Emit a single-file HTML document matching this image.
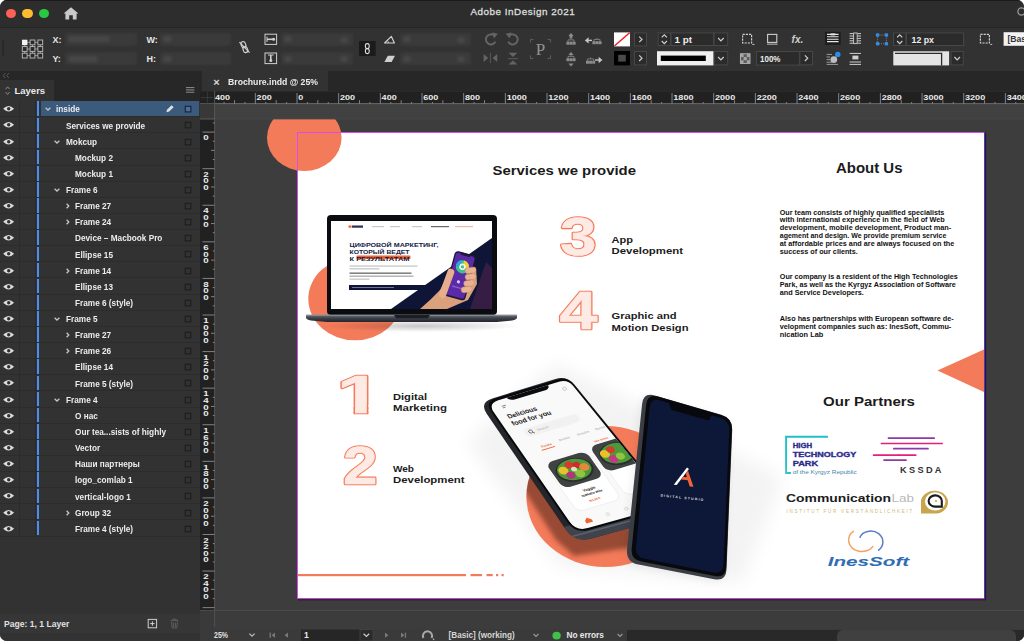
<!DOCTYPE html>
<html lang="en"><head><meta charset="utf-8"><title>Adobe InDesign 2021</title>
<style>
html,body{margin:0;padding:0;background:#fff;}
body{width:1024px;height:641px;overflow:hidden;position:relative;font-family:"Liberation Sans", "DejaVu Sans", sans-serif;}
#win{position:absolute;left:0;top:0;width:1024px;height:641px;background:#323232;border-radius:7px;overflow:hidden;}
.abs{position:absolute;}
.t{position:absolute;white-space:nowrap;color:#e6e6e6;font-weight:bold;font-size:9px;line-height:12px;transform-origin:0 50%;}
.row .t{transform:scaleX(.958);}
.fld{position:absolute;background:#3a3a3a;border-radius:2px;filter:blur(.9px);}
.smg{position:absolute;background:#474747;height:6px;border-radius:3px;filter:blur(1.6px);}
.box{position:absolute;background:#2b2b2b;border:1px solid #454545;box-sizing:border-box;border-radius:1px;}
.row{position:absolute;left:0;width:200px;height:16.1px;}
.row .sep{position:absolute;left:0;right:0;bottom:0;height:1px;background:#2c2c2c;}
svg{position:absolute;left:0;top:0;overflow:visible;}
#cv text,#ch text{font-family:"Liberation Sans", "DejaVu Sans", sans-serif;}
</style></head><body><div id="win">

<div class="abs" style="left:0;top:0;width:1024px;height:27px;background:#2d2d2d"></div>
<div class="abs" style="left:0;top:0;width:1024px;height:1px;background:#1b1b1b"></div>
<div class="abs" style="left:0;top:27px;width:1024px;height:1px;background:#262626"></div>
<div class="abs" style="left:5.9px;top:8.9px;width:10.2px;height:9.6px;border-radius:50%;background:#fe5f57"></div>
<div class="abs" style="left:22.4px;top:8.9px;width:10.2px;height:9.6px;border-radius:50%;background:#febc2e"></div>
<div class="abs" style="left:38.9px;top:8.9px;width:10.2px;height:9.6px;border-radius:50%;background:#28c840"></div>
<div class="t" style="left:470.5px;top:5.8px;font-size:9.9px;letter-spacing:.51px;color:#dedede;font-weight:normal;-webkit-text-stroke:.3px #dedede" id="ttl">Adobe InDesign 2021</div>
<div class="abs" style="left:0;top:28px;width:1024px;height:43px;background:#323232"></div>
<div class="fld" style="left:64.5px;top:32.5px;width:72px;height:13.5px"></div>
<div class="fld" style="left:64.5px;top:51.5px;width:72px;height:13.5px"></div>
<div class="fld" style="left:160px;top:32.5px;width:71px;height:13.5px"></div>
<div class="fld" style="left:160px;top:51.5px;width:71px;height:13.5px"></div>
<div class="fld" style="left:281px;top:32.5px;width:72px;height:13.5px"></div>
<div class="fld" style="left:281px;top:51.5px;width:72px;height:13.5px"></div>
<div class="fld" style="left:400px;top:32.5px;width:71px;height:13.5px"></div>
<div class="fld" style="left:400px;top:51.5px;width:71px;height:13.5px"></div>
<div class="smg" style="left:68px;top:36px;width:42px"></div>
<div class="smg" style="left:68px;top:55.5px;width:30px"></div>
<div class="smg" style="left:163px;top:36px;width:9px"></div>
<div class="smg" style="left:163px;top:55.5px;width:9px"></div>
<div class="smg" style="left:284px;top:36px;width:8px"></div>
<div class="smg" style="left:340px;top:37px;width:8px"></div>
<div class="smg" style="left:284px;top:55.5px;width:8px"></div>
<div class="smg" style="left:340px;top:56px;width:8px"></div>
<div class="smg" style="left:403px;top:36px;width:8px"></div>
<div class="smg" style="left:457px;top:37px;width:8px"></div>
<div class="smg" style="left:403px;top:55.5px;width:8px"></div>
<div class="smg" style="left:457px;top:56px;width:8px"></div>
<div class="t" style="left:52.5px;top:33.5px;font-size:9px">X:</div>
<div class="t" style="left:52.5px;top:53px;font-size:9px">Y:</div>
<div class="t" style="left:146.5px;top:33.5px;font-size:9px">W:</div>
<div class="t" style="left:146.5px;top:53px;font-size:9px">H:</div>
<div class="abs" style="left:0;top:71px;width:1024px;height:20px;background:#272727"></div>
<div class="abs" style="left:0;top:80px;width:54px;height:21px;background:#323232"></div>
<div class="t" style="left:14.5px;top:84.5px;font-size:9.5px;color:#ececec">Layers</div>
<div class="abs" style="left:54px;top:80px;width:146px;height:21px;background:#272727"></div>
<div class="abs" style="left:201.5px;top:71px;width:126.5px;height:20.5px;background:#323232"></div>
<div class="t" style="left:228px;top:75.5px;font-size:8.8px;color:#ececec;transform:scaleX(.987)" id="tab">Brochure.indd @ 25%</div>
<div class="t" style="left:213.2px;top:75.6px;font-size:11px;color:#dadada;font-weight:bold">×</div>
<div class="abs" style="left:0;top:101px;width:200px;height:540px;background:#323232"></div>
<div class="row" style="top:101.10px">
<div class="abs" style="left:40.6px;top:0;width:158px;height:16.1px;background:#3c5a7c"></div>
<div class="sep"></div>
<div class="abs" style="left:36.9px;top:0.3px;width:2.5px;height:14.6px;background:#4a8ff0"></div>
<svg width="200" height="16" style="top:0.2px"><path d="M3.1 7.8 Q8.6 2.4 14.1 7.8 Q8.6 13.2 3.1 7.8Z" fill="#dcdcdc"/><circle cx="8.7" cy="7.7" r="1.7" fill="#323232"/>
<path d="M45.6 6.8 L48 9 L50.4 6.8" stroke="#c4c4c4" stroke-width="1.3" fill="none"/>
<rect x="185.3" y="5.3" width="5.6" height="5.6" fill="#4d6e97" stroke="#14233a" stroke-width="1.1"/>
<path d="M166.3 11.2 L167.2 8.6 L171.6 4.2 L173.6 6.2 L169.2 10.6 Z" fill="#e0e0e0"/>
</svg>
<div class="t" style="left:56px;top:2.3px;font-size:8.6px;color:#ececec">inside</div>
</div>
<div class="row" style="top:117.23px">
<div class="sep"></div>
<div class="abs" style="left:36.9px;top:0.3px;width:2.5px;height:14.6px;background:#4a8ff0"></div>
<svg width="200" height="16" style="top:0.2px"><path d="M3.1 7.8 Q8.6 2.4 14.1 7.8 Q8.6 13.2 3.1 7.8Z" fill="#dcdcdc"/><circle cx="8.7" cy="7.7" r="1.7" fill="#323232"/>
<rect x="185.3" y="5.3" width="5.6" height="5.6" fill="none" stroke="#1c1c1c" stroke-width="1"/>
</svg>
<div class="t" style="left:65.5px;top:2.3px;font-size:8.6px;color:#ececec">Services we provide</div>
</div>
<div class="row" style="top:133.36px">
<div class="sep"></div>
<div class="abs" style="left:36.9px;top:0.3px;width:2.5px;height:14.6px;background:#4a8ff0"></div>
<svg width="200" height="16" style="top:0.2px"><path d="M3.1 7.8 Q8.6 2.4 14.1 7.8 Q8.6 13.2 3.1 7.8Z" fill="#dcdcdc"/><circle cx="8.7" cy="7.7" r="1.7" fill="#323232"/>
<path d="M54.6 6.8 L57 9 L59.4 6.8" stroke="#c4c4c4" stroke-width="1.3" fill="none"/>
<rect x="185.3" y="5.3" width="5.6" height="5.6" fill="none" stroke="#1c1c1c" stroke-width="1"/>
</svg>
<div class="t" style="left:65.5px;top:2.3px;font-size:8.6px;color:#ececec">Mokcup</div>
</div>
<div class="row" style="top:149.49px">
<div class="sep"></div>
<div class="abs" style="left:36.9px;top:0.3px;width:2.5px;height:14.6px;background:#4a8ff0"></div>
<svg width="200" height="16" style="top:0.2px"><path d="M3.1 7.8 Q8.6 2.4 14.1 7.8 Q8.6 13.2 3.1 7.8Z" fill="#dcdcdc"/><circle cx="8.7" cy="7.7" r="1.7" fill="#323232"/>
<rect x="185.3" y="5.3" width="5.6" height="5.6" fill="none" stroke="#1c1c1c" stroke-width="1"/>
</svg>
<div class="t" style="left:74.5px;top:2.3px;font-size:8.6px;color:#ececec">Mockup 2</div>
</div>
<div class="row" style="top:165.62px">
<div class="sep"></div>
<div class="abs" style="left:36.9px;top:0.3px;width:2.5px;height:14.6px;background:#4a8ff0"></div>
<svg width="200" height="16" style="top:0.2px"><path d="M3.1 7.8 Q8.6 2.4 14.1 7.8 Q8.6 13.2 3.1 7.8Z" fill="#dcdcdc"/><circle cx="8.7" cy="7.7" r="1.7" fill="#323232"/>
<rect x="185.3" y="5.3" width="5.6" height="5.6" fill="none" stroke="#1c1c1c" stroke-width="1"/>
</svg>
<div class="t" style="left:74.5px;top:2.3px;font-size:8.6px;color:#ececec">Mockup 1</div>
</div>
<div class="row" style="top:181.75px">
<div class="sep"></div>
<div class="abs" style="left:36.9px;top:0.3px;width:2.5px;height:14.6px;background:#4a8ff0"></div>
<svg width="200" height="16" style="top:0.2px"><path d="M3.1 7.8 Q8.6 2.4 14.1 7.8 Q8.6 13.2 3.1 7.8Z" fill="#dcdcdc"/><circle cx="8.7" cy="7.7" r="1.7" fill="#323232"/>
<path d="M54.6 6.8 L57 9 L59.4 6.8" stroke="#c4c4c4" stroke-width="1.3" fill="none"/>
<rect x="185.3" y="5.3" width="5.6" height="5.6" fill="none" stroke="#1c1c1c" stroke-width="1"/>
</svg>
<div class="t" style="left:65.5px;top:2.3px;font-size:8.6px;color:#ececec">Frame 6</div>
</div>
<div class="row" style="top:197.88px">
<div class="sep"></div>
<div class="abs" style="left:36.9px;top:0.3px;width:2.5px;height:14.6px;background:#4a8ff0"></div>
<svg width="200" height="16" style="top:0.2px"><path d="M3.1 7.8 Q8.6 2.4 14.1 7.8 Q8.6 13.2 3.1 7.8Z" fill="#dcdcdc"/><circle cx="8.7" cy="7.7" r="1.7" fill="#323232"/>
<path d="M66.6 5.8 L68.8 8 L66.6 10.2" stroke="#c4c4c4" stroke-width="1.3" fill="none"/>
<rect x="185.3" y="5.3" width="5.6" height="5.6" fill="none" stroke="#1c1c1c" stroke-width="1"/>
</svg>
<div class="t" style="left:74.5px;top:2.3px;font-size:8.6px;color:#ececec">Frame 27</div>
</div>
<div class="row" style="top:214.01px">
<div class="sep"></div>
<div class="abs" style="left:36.9px;top:0.3px;width:2.5px;height:14.6px;background:#4a8ff0"></div>
<svg width="200" height="16" style="top:0.2px"><path d="M3.1 7.8 Q8.6 2.4 14.1 7.8 Q8.6 13.2 3.1 7.8Z" fill="#dcdcdc"/><circle cx="8.7" cy="7.7" r="1.7" fill="#323232"/>
<path d="M66.6 5.8 L68.8 8 L66.6 10.2" stroke="#c4c4c4" stroke-width="1.3" fill="none"/>
<rect x="185.3" y="5.3" width="5.6" height="5.6" fill="none" stroke="#1c1c1c" stroke-width="1"/>
</svg>
<div class="t" style="left:74.5px;top:2.3px;font-size:8.6px;color:#ececec">Frame 24</div>
</div>
<div class="row" style="top:230.14px">
<div class="sep"></div>
<div class="abs" style="left:36.9px;top:0.3px;width:2.5px;height:14.6px;background:#4a8ff0"></div>
<svg width="200" height="16" style="top:0.2px"><path d="M3.1 7.8 Q8.6 2.4 14.1 7.8 Q8.6 13.2 3.1 7.8Z" fill="#dcdcdc"/><circle cx="8.7" cy="7.7" r="1.7" fill="#323232"/>
<rect x="185.3" y="5.3" width="5.6" height="5.6" fill="none" stroke="#1c1c1c" stroke-width="1"/>
</svg>
<div class="t" style="left:74.5px;top:2.3px;font-size:8.6px;color:#ececec">Device – Macbook Pro</div>
</div>
<div class="row" style="top:246.27px">
<div class="sep"></div>
<div class="abs" style="left:36.9px;top:0.3px;width:2.5px;height:14.6px;background:#4a8ff0"></div>
<svg width="200" height="16" style="top:0.2px"><path d="M3.1 7.8 Q8.6 2.4 14.1 7.8 Q8.6 13.2 3.1 7.8Z" fill="#dcdcdc"/><circle cx="8.7" cy="7.7" r="1.7" fill="#323232"/>
<rect x="185.3" y="5.3" width="5.6" height="5.6" fill="none" stroke="#1c1c1c" stroke-width="1"/>
</svg>
<div class="t" style="left:74.5px;top:2.3px;font-size:8.6px;color:#ececec">Ellipse 15</div>
</div>
<div class="row" style="top:262.40px">
<div class="sep"></div>
<div class="abs" style="left:36.9px;top:0.3px;width:2.5px;height:14.6px;background:#4a8ff0"></div>
<svg width="200" height="16" style="top:0.2px"><path d="M3.1 7.8 Q8.6 2.4 14.1 7.8 Q8.6 13.2 3.1 7.8Z" fill="#dcdcdc"/><circle cx="8.7" cy="7.7" r="1.7" fill="#323232"/>
<path d="M66.6 5.8 L68.8 8 L66.6 10.2" stroke="#c4c4c4" stroke-width="1.3" fill="none"/>
<rect x="185.3" y="5.3" width="5.6" height="5.6" fill="none" stroke="#1c1c1c" stroke-width="1"/>
</svg>
<div class="t" style="left:74.5px;top:2.3px;font-size:8.6px;color:#ececec">Frame 14</div>
</div>
<div class="row" style="top:278.53px">
<div class="sep"></div>
<div class="abs" style="left:36.9px;top:0.3px;width:2.5px;height:14.6px;background:#4a8ff0"></div>
<svg width="200" height="16" style="top:0.2px"><path d="M3.1 7.8 Q8.6 2.4 14.1 7.8 Q8.6 13.2 3.1 7.8Z" fill="#dcdcdc"/><circle cx="8.7" cy="7.7" r="1.7" fill="#323232"/>
<rect x="185.3" y="5.3" width="5.6" height="5.6" fill="none" stroke="#1c1c1c" stroke-width="1"/>
</svg>
<div class="t" style="left:74.5px;top:2.3px;font-size:8.6px;color:#ececec">Ellipse 13</div>
</div>
<div class="row" style="top:294.66px">
<div class="sep"></div>
<div class="abs" style="left:36.9px;top:0.3px;width:2.5px;height:14.6px;background:#4a8ff0"></div>
<svg width="200" height="16" style="top:0.2px"><path d="M3.1 7.8 Q8.6 2.4 14.1 7.8 Q8.6 13.2 3.1 7.8Z" fill="#dcdcdc"/><circle cx="8.7" cy="7.7" r="1.7" fill="#323232"/>
<rect x="185.3" y="5.3" width="5.6" height="5.6" fill="none" stroke="#1c1c1c" stroke-width="1"/>
</svg>
<div class="t" style="left:74.5px;top:2.3px;font-size:8.6px;color:#ececec">Frame 6 (style)</div>
</div>
<div class="row" style="top:310.79px">
<div class="sep"></div>
<div class="abs" style="left:36.9px;top:0.3px;width:2.5px;height:14.6px;background:#4a8ff0"></div>
<svg width="200" height="16" style="top:0.2px"><path d="M3.1 7.8 Q8.6 2.4 14.1 7.8 Q8.6 13.2 3.1 7.8Z" fill="#dcdcdc"/><circle cx="8.7" cy="7.7" r="1.7" fill="#323232"/>
<path d="M54.6 6.8 L57 9 L59.4 6.8" stroke="#c4c4c4" stroke-width="1.3" fill="none"/>
<rect x="185.3" y="5.3" width="5.6" height="5.6" fill="none" stroke="#1c1c1c" stroke-width="1"/>
</svg>
<div class="t" style="left:65.5px;top:2.3px;font-size:8.6px;color:#ececec">Frame 5</div>
</div>
<div class="row" style="top:326.92px">
<div class="sep"></div>
<div class="abs" style="left:36.9px;top:0.3px;width:2.5px;height:14.6px;background:#4a8ff0"></div>
<svg width="200" height="16" style="top:0.2px"><path d="M3.1 7.8 Q8.6 2.4 14.1 7.8 Q8.6 13.2 3.1 7.8Z" fill="#dcdcdc"/><circle cx="8.7" cy="7.7" r="1.7" fill="#323232"/>
<path d="M66.6 5.8 L68.8 8 L66.6 10.2" stroke="#c4c4c4" stroke-width="1.3" fill="none"/>
<rect x="185.3" y="5.3" width="5.6" height="5.6" fill="none" stroke="#1c1c1c" stroke-width="1"/>
</svg>
<div class="t" style="left:74.5px;top:2.3px;font-size:8.6px;color:#ececec">Frame 27</div>
</div>
<div class="row" style="top:343.05px">
<div class="sep"></div>
<div class="abs" style="left:36.9px;top:0.3px;width:2.5px;height:14.6px;background:#4a8ff0"></div>
<svg width="200" height="16" style="top:0.2px"><path d="M3.1 7.8 Q8.6 2.4 14.1 7.8 Q8.6 13.2 3.1 7.8Z" fill="#dcdcdc"/><circle cx="8.7" cy="7.7" r="1.7" fill="#323232"/>
<path d="M66.6 5.8 L68.8 8 L66.6 10.2" stroke="#c4c4c4" stroke-width="1.3" fill="none"/>
<rect x="185.3" y="5.3" width="5.6" height="5.6" fill="none" stroke="#1c1c1c" stroke-width="1"/>
</svg>
<div class="t" style="left:74.5px;top:2.3px;font-size:8.6px;color:#ececec">Frame 26</div>
</div>
<div class="row" style="top:359.18px">
<div class="sep"></div>
<div class="abs" style="left:36.9px;top:0.3px;width:2.5px;height:14.6px;background:#4a8ff0"></div>
<svg width="200" height="16" style="top:0.2px"><path d="M3.1 7.8 Q8.6 2.4 14.1 7.8 Q8.6 13.2 3.1 7.8Z" fill="#dcdcdc"/><circle cx="8.7" cy="7.7" r="1.7" fill="#323232"/>
<rect x="185.3" y="5.3" width="5.6" height="5.6" fill="none" stroke="#1c1c1c" stroke-width="1"/>
</svg>
<div class="t" style="left:74.5px;top:2.3px;font-size:8.6px;color:#ececec">Ellipse 14</div>
</div>
<div class="row" style="top:375.31px">
<div class="sep"></div>
<div class="abs" style="left:36.9px;top:0.3px;width:2.5px;height:14.6px;background:#4a8ff0"></div>
<svg width="200" height="16" style="top:0.2px"><path d="M3.1 7.8 Q8.6 2.4 14.1 7.8 Q8.6 13.2 3.1 7.8Z" fill="#dcdcdc"/><circle cx="8.7" cy="7.7" r="1.7" fill="#323232"/>
<rect x="185.3" y="5.3" width="5.6" height="5.6" fill="none" stroke="#1c1c1c" stroke-width="1"/>
</svg>
<div class="t" style="left:74.5px;top:2.3px;font-size:8.6px;color:#ececec">Frame 5 (style)</div>
</div>
<div class="row" style="top:391.44px">
<div class="sep"></div>
<div class="abs" style="left:36.9px;top:0.3px;width:2.5px;height:14.6px;background:#4a8ff0"></div>
<svg width="200" height="16" style="top:0.2px"><path d="M3.1 7.8 Q8.6 2.4 14.1 7.8 Q8.6 13.2 3.1 7.8Z" fill="#dcdcdc"/><circle cx="8.7" cy="7.7" r="1.7" fill="#323232"/>
<path d="M54.6 6.8 L57 9 L59.4 6.8" stroke="#c4c4c4" stroke-width="1.3" fill="none"/>
<rect x="185.3" y="5.3" width="5.6" height="5.6" fill="none" stroke="#1c1c1c" stroke-width="1"/>
</svg>
<div class="t" style="left:65.5px;top:2.3px;font-size:8.6px;color:#ececec">Frame 4</div>
</div>
<div class="row" style="top:407.57px">
<div class="sep"></div>
<div class="abs" style="left:36.9px;top:0.3px;width:2.5px;height:14.6px;background:#4a8ff0"></div>
<svg width="200" height="16" style="top:0.2px"><path d="M3.1 7.8 Q8.6 2.4 14.1 7.8 Q8.6 13.2 3.1 7.8Z" fill="#dcdcdc"/><circle cx="8.7" cy="7.7" r="1.7" fill="#323232"/>
<rect x="185.3" y="5.3" width="5.6" height="5.6" fill="none" stroke="#1c1c1c" stroke-width="1"/>
</svg>
<div class="t" style="left:74.5px;top:2.3px;font-size:8.6px;color:#ececec">О нас</div>
</div>
<div class="row" style="top:423.70px">
<div class="sep"></div>
<div class="abs" style="left:36.9px;top:0.3px;width:2.5px;height:14.6px;background:#4a8ff0"></div>
<svg width="200" height="16" style="top:0.2px"><path d="M3.1 7.8 Q8.6 2.4 14.1 7.8 Q8.6 13.2 3.1 7.8Z" fill="#dcdcdc"/><circle cx="8.7" cy="7.7" r="1.7" fill="#323232"/>
<rect x="185.3" y="5.3" width="5.6" height="5.6" fill="none" stroke="#1c1c1c" stroke-width="1"/>
</svg>
<div class="t" style="left:74.5px;top:2.3px;font-size:8.6px;color:#ececec">Our tea...sists of highly</div>
</div>
<div class="row" style="top:439.83px">
<div class="sep"></div>
<div class="abs" style="left:36.9px;top:0.3px;width:2.5px;height:14.6px;background:#4a8ff0"></div>
<svg width="200" height="16" style="top:0.2px"><path d="M3.1 7.8 Q8.6 2.4 14.1 7.8 Q8.6 13.2 3.1 7.8Z" fill="#dcdcdc"/><circle cx="8.7" cy="7.7" r="1.7" fill="#323232"/>
<rect x="185.3" y="5.3" width="5.6" height="5.6" fill="none" stroke="#1c1c1c" stroke-width="1"/>
</svg>
<div class="t" style="left:74.5px;top:2.3px;font-size:8.6px;color:#ececec">Vector</div>
</div>
<div class="row" style="top:455.96px">
<div class="sep"></div>
<div class="abs" style="left:36.9px;top:0.3px;width:2.5px;height:14.6px;background:#4a8ff0"></div>
<svg width="200" height="16" style="top:0.2px"><path d="M3.1 7.8 Q8.6 2.4 14.1 7.8 Q8.6 13.2 3.1 7.8Z" fill="#dcdcdc"/><circle cx="8.7" cy="7.7" r="1.7" fill="#323232"/>
<rect x="185.3" y="5.3" width="5.6" height="5.6" fill="none" stroke="#1c1c1c" stroke-width="1"/>
</svg>
<div class="t" style="left:74.5px;top:2.3px;font-size:8.6px;color:#ececec">Наши партнеры</div>
</div>
<div class="row" style="top:472.09px">
<div class="sep"></div>
<div class="abs" style="left:36.9px;top:0.3px;width:2.5px;height:14.6px;background:#4a8ff0"></div>
<svg width="200" height="16" style="top:0.2px"><path d="M3.1 7.8 Q8.6 2.4 14.1 7.8 Q8.6 13.2 3.1 7.8Z" fill="#dcdcdc"/><circle cx="8.7" cy="7.7" r="1.7" fill="#323232"/>
<rect x="185.3" y="5.3" width="5.6" height="5.6" fill="none" stroke="#1c1c1c" stroke-width="1"/>
</svg>
<div class="t" style="left:74.5px;top:2.3px;font-size:8.6px;color:#ececec">logo_comlab 1</div>
</div>
<div class="row" style="top:488.22px">
<div class="sep"></div>
<div class="abs" style="left:36.9px;top:0.3px;width:2.5px;height:14.6px;background:#4a8ff0"></div>
<svg width="200" height="16" style="top:0.2px"><path d="M3.1 7.8 Q8.6 2.4 14.1 7.8 Q8.6 13.2 3.1 7.8Z" fill="#dcdcdc"/><circle cx="8.7" cy="7.7" r="1.7" fill="#323232"/>
<rect x="185.3" y="5.3" width="5.6" height="5.6" fill="none" stroke="#1c1c1c" stroke-width="1"/>
</svg>
<div class="t" style="left:74.5px;top:2.3px;font-size:8.6px;color:#ececec">vertical-logo 1</div>
</div>
<div class="row" style="top:504.35px">
<div class="sep"></div>
<div class="abs" style="left:36.9px;top:0.3px;width:2.5px;height:14.6px;background:#4a8ff0"></div>
<svg width="200" height="16" style="top:0.2px"><path d="M3.1 7.8 Q8.6 2.4 14.1 7.8 Q8.6 13.2 3.1 7.8Z" fill="#dcdcdc"/><circle cx="8.7" cy="7.7" r="1.7" fill="#323232"/>
<path d="M66.6 5.8 L68.8 8 L66.6 10.2" stroke="#c4c4c4" stroke-width="1.3" fill="none"/>
<rect x="185.3" y="5.3" width="5.6" height="5.6" fill="none" stroke="#1c1c1c" stroke-width="1"/>
</svg>
<div class="t" style="left:74.5px;top:2.3px;font-size:8.6px;color:#ececec">Group 32</div>
</div>
<div class="row" style="top:520.48px">
<div class="sep"></div>
<div class="abs" style="left:36.9px;top:0.3px;width:2.5px;height:14.6px;background:#4a8ff0"></div>
<svg width="200" height="16" style="top:0.2px"><path d="M3.1 7.8 Q8.6 2.4 14.1 7.8 Q8.6 13.2 3.1 7.8Z" fill="#dcdcdc"/><circle cx="8.7" cy="7.7" r="1.7" fill="#323232"/>
<rect x="185.3" y="5.3" width="5.6" height="5.6" fill="none" stroke="#1c1c1c" stroke-width="1"/>
</svg>
<div class="t" style="left:74.5px;top:2.3px;font-size:8.6px;color:#ececec">Frame 4 (style)</div>
</div>
<div class="abs" style="left:18.5px;top:101px;width:1px;height:435px;background:#2c2c2c"></div><div class="abs" style="left:35px;top:101px;width:1px;height:435px;background:#2b2b2b"></div>
<div class="abs" style="left:0;top:614px;width:200px;height:19px;background:#363636"></div>
<div class="t" style="left:4px;top:618px;font-size:8.6px;color:#e0e0e0">Page: 1, 1 Layer</div>
<div class="abs" style="left:200px;top:103px;width:824px;height:16px;background:#414141"></div>
<div class="abs" style="left:215px;top:119px;width:809px;height:491.5px;background:#3d3d3d"></div>
<div class="abs" style="left:200px;top:610.5px;width:824px;height:19px;background:#3c3c3c"></div>
<div class="abs" style="left:200px;top:629px;width:824px;height:12px;background:#3a3a3a"></div>
<div class="abs" style="left:627px;top:630px;width:397px;height:11px;background:#292929"></div>
<div class="abs" style="left:837px;top:630px;width:179px;height:11px;background:#404040;border-radius:6px 6px 0 0"></div>
<svg id="cv" width="1024" height="641" viewBox="0 0 1024 641">
<defs>
<clipPath id="cpCanvas"><rect x="215" y="119" width="809" height="491.5"/></clipPath>
<clipPath id="cpPage"><rect x="297" y="132" width="688" height="467"/></clipPath>
<clipPath id="cpScreen"><rect x="331" y="221" width="161" height="88"/></clipPath>
<linearGradient id="gMock" x1="0" y1="0" x2="1" y2="0.6"><stop offset="0" stop-color="#ffffff"/><stop offset="0.35" stop-color="#fafafa"/><stop offset="0.62" stop-color="#ececec"/><stop offset="0.8" stop-color="#fbfbfb"/><stop offset="1" stop-color="#f1f1f1"/></linearGradient>
<linearGradient id="gBase" x1="0" y1="0" x2="0" y2="1"><stop offset="0" stop-color="#6b7079"/><stop offset="0.5" stop-color="#3a3e46"/><stop offset="1" stop-color="#22252b"/></linearGradient>
<radialGradient id="gShadow"><stop offset="0" stop-color="#000" stop-opacity="0.22"/><stop offset="1" stop-color="#000" stop-opacity="0"/></radialGradient>
</defs>
<g clip-path="url(#cpCanvas)">
<rect x="297" y="132" width="688" height="467" fill="#ffffff"/>
<rect x="298" y="599" width="688" height="1.5" fill="#2a2a2a"/>
<g clip-path="url(#cpPage)">
<ellipse cx="355" cy="298.8" rx="46.7" ry="41.5" fill="#f47b5a"/>
<path d="M985 349 L937.5 370.5 L985 392.5 Z" fill="#f47b5a"/>
<g fill="#f47b5a"><rect x="297" y="574" width="169" height="2.2"/><rect x="470.5" y="574" width="11.5" height="2.2"/><rect x="486.5" y="574" width="6.2" height="2.2"/><rect x="496" y="574" width="2.2" height="2.2"/><rect x="501.5" y="574" width="2.2" height="2.2"/></g>
</g>
<ellipse cx="304.3" cy="137.8" rx="37.3" ry="33.2" fill="#f47b5a"/>
<rect x="297" y="132" width="688" height="1" fill="#d94cf0"/>
<rect x="297" y="132" width="1" height="467" fill="#d94cf0"/>
<rect x="297" y="598" width="688" height="1" fill="#c93fe0"/>
<rect x="984" y="132" width="1.2" height="467" fill="#5a2fd0"/><rect x="985.2" y="132.6" width="0.9" height="467.4" fill="#1a1a1a"/>
<ellipse cx="420" cy="326" rx="100" ry="6" fill="url(#gShadow)"/>
<rect x="327" y="215" width="170" height="100" rx="4" fill="#0b0c10"/>
<rect x="331" y="221" width="161" height="88" fill="#ffffff"/>
<g clip-path="url(#cpScreen)">
<path d="M391 309 L492 238 L492 309 Z" fill="#0e1536"/>
<rect x="349" y="285" width="80" height="5" fill="#0e1536"/>
<path d="M470 309 L486 262 L492 268 L492 309Z" fill="#43204a" opacity=".75"/>
<path d="M420 309 L447 309 L468 300 L477 284 L476 268 L466 261 L452 268 L440 290 L430 300 Z" fill="#dba07c"/>
<g transform="rotate(15 460 276)"><rect x="449" y="252.5" width="22" height="46.5" rx="3.5" fill="#1f1838"/><rect x="450.3" y="254" width="19.4" height="43.4" rx="2.6" fill="#5b2aa6"/><rect x="455" y="252.8" width="10" height="2.4" rx="1.2" fill="#1f1838"/><circle cx="460" cy="266.5" r="6.6" fill="#3cc486"/><path d="M460 266.5 L460 259.9 A6.6 6.6 0 0 1 466.3 268.4 Z" fill="#f2d12e"/><path d="M460 266.5 L453.6 268 A6.6 6.6 0 0 1 457 260.6 Z" fill="#2aa7e0"/><circle cx="460" cy="266.5" r="3.2" fill="#f4f4f4"/><circle cx="460" cy="266.5" r="1.6" fill="#3cc486"/><circle cx="460" cy="282" r="1.6" fill="#d9c9f2"/><rect x="455" y="287" width="10" height="1.4" fill="#8a5ad0"/></g>
<rect x="443.2" y="268" width="7" height="31" rx="3.5" fill="#e6ae8c" transform="rotate(20 446.7 283.5)"/>
<rect x="465.1" y="267.5" width="11" height="5.8" rx="2.9" fill="#e9b392" stroke="#c98f6e" stroke-width=".5" transform="rotate(-8 470.6 270.4)"/>
<rect x="465.1" y="273.90000000000003" width="11" height="5.8" rx="2.9" fill="#e9b392" stroke="#c98f6e" stroke-width=".5" transform="rotate(-8 470.6 276.8)"/>
<rect x="463.7" y="280.3" width="11" height="5.8" rx="2.9" fill="#e9b392" stroke="#c98f6e" stroke-width=".5" transform="rotate(-8 469.2 283.2)"/>
<rect x="461.1" y="286.5" width="11" height="5.8" rx="2.9" fill="#e9b392" stroke="#c98f6e" stroke-width=".5" transform="rotate(-8 466.6 289.4)"/>
</g>
<g fill="#101a3f" font-weight="bold" font-size="5.6">
<rect x="356.5" y="255.6" width="54" height="3.4" fill="#f0622e" rx="1"/>
<text x="349.5" y="247.2" textLength="89" lengthAdjust="spacingAndGlyphs">ЦИФРОВОЙ МАРКЕТИНГ,</text>
<text x="349.5" y="254" textLength="60" lengthAdjust="spacingAndGlyphs">КОТОРЫЙ ВЕДЕТ</text>
<text x="349.5" y="260.8" textLength="60" lengthAdjust="spacingAndGlyphs">К РЕЗУЛЬТАТАМ</text>
</g>
<rect x="348.5" y="225.5" width="3" height="2.2" fill="#f0622e"/><rect x="352" y="225.5" width="11" height="2.2" fill="#2a3156"/>
<rect x="372" y="226" width="12" height="1.2" fill="#c9c9c9"/>
<rect x="390" y="226" width="10" height="1.2" fill="#c9c9c9"/>
<rect x="412" y="226" width="10" height="1.2" fill="#c9c9c9"/>
<rect x="431" y="226" width="18" height="1.2" fill="#666"/>
<rect x="455" y="226" width="18" height="1.2" fill="#f6b8a4"/>
<rect x="349.5" y="265.5" width="68" height="1.1" fill="#bdbdbd"/>
<rect x="349.5" y="268.3" width="30" height="1.1" fill="#bdbdbd"/>
<rect x="349.5" y="272.6" width="62" height="1.1" fill="#4a4a4a"/>
<rect x="349.5" y="275.6" width="64" height="1.1" fill="#9a9a9a"/>
<rect x="349.5" y="278.6" width="20" height="1.1" fill="#bdbdbd"/>
<rect x="352" y="287" width="42" height="1" fill="#6d7390"/>
<path d="M306 315 L517 315 L517 317.5 Q517 319.5 512 320.5 L497 322 L327 322 L311 320.5 Q306 319.5 306 317.5 Z" fill="url(#gBase)"/>
<rect x="306" y="314.6" width="211" height="1.2" fill="#8a8f98"/>
<path d="M394 315 L430 315 L428 318.3 L396 318.3 Z" fill="#1c1e24"/>
<g fill="#1b1b1b" font-weight="bold">
<text x="492.5" y="175.4" font-size="13.6" textLength="143.5" lengthAdjust="spacingAndGlyphs">Services we provide</text>
<text x="836" y="173" font-size="14.6" textLength="66.5" lengthAdjust="spacingAndGlyphs">About Us</text>
<text x="823" y="406.2" font-size="13" textLength="92" lengthAdjust="spacingAndGlyphs">Our Partners</text>
</g>
<g fill="#1b1b1b" font-weight="bold" font-size="9.7">
<text x="611.5" y="242.6" textLength="21.5" lengthAdjust="spacingAndGlyphs">App</text>
<text x="611.5" y="254.4" textLength="71.5" lengthAdjust="spacingAndGlyphs">Development</text>
<text x="611.5" y="319.2" textLength="65" lengthAdjust="spacingAndGlyphs">Graphic and</text>
<text x="611.5" y="330.6" textLength="77" lengthAdjust="spacingAndGlyphs">Motion Design</text>
<text x="393" y="399.5" textLength="34" lengthAdjust="spacingAndGlyphs">Digital</text>
<text x="393" y="411" textLength="54" lengthAdjust="spacingAndGlyphs">Marketing</text>
<text x="393" y="471.5" textLength="21" lengthAdjust="spacingAndGlyphs">Web</text>
<text x="393" y="483.3" textLength="71.5" lengthAdjust="spacingAndGlyphs">Development</text>
</g>
<clipPath id="cp1a"><path d="M330 360H390V404.9H368.4V416H353.5V404.9H330Z"/></clipPath>
<clipPath id="cp1b"><path d="M330 360H390V404.9H366.75V416H355.05V404.9H330Z"/></clipPath>
<g fill="#f47b5a" stroke="#f47b5a" stroke-width="2.6" font-weight="bold" font-size="54.5" stroke-linejoin="round">
<text x="560" y="255.2" textLength="36.5" lengthAdjust="spacingAndGlyphs">3</text>
<text x="559.5" y="328.8" textLength="38" lengthAdjust="spacingAndGlyphs">4</text>
<text x="343" y="483.6" textLength="34.5" lengthAdjust="spacingAndGlyphs">2</text>
<g clip-path="url(#cp1a)"><text x="336.8" y="412.8" textLength="44.7" lengthAdjust="spacingAndGlyphs">1</text></g>
</g>
<g fill="#fdeae4" stroke="#fdeae4" stroke-width="0.5" font-weight="bold" font-size="54.5" stroke-linejoin="round">
<text x="560" y="255.2" textLength="36.5" lengthAdjust="spacingAndGlyphs">3</text>
<text x="559.5" y="328.8" textLength="38" lengthAdjust="spacingAndGlyphs">4</text>
<text x="343" y="483.6" textLength="34.5" lengthAdjust="spacingAndGlyphs">2</text>
<g clip-path="url(#cp1b)"><text x="336.8" y="412.8" textLength="44.7" lengthAdjust="spacingAndGlyphs">1</text></g>
</g>
<g fill="#111" font-weight="bold" font-size="6.9">
<text x="779.8" y="214.60" textLength="164.5" lengthAdjust="spacingAndGlyphs">Our team consists of highly qualified specialists</text>
<text x="779.8" y="222.47" textLength="165" lengthAdjust="spacingAndGlyphs">with international experience in the field of Web</text>
<text x="779.8" y="230.34" textLength="171.5" lengthAdjust="spacingAndGlyphs">development, mobile development, Product man-</text>
<text x="779.8" y="238.21" textLength="166.5" lengthAdjust="spacingAndGlyphs">agement and design. We provide premium service</text>
<text x="779.8" y="246.08" textLength="174.5" lengthAdjust="spacingAndGlyphs">at affordable prices and are always focused on the</text>
<text x="779.8" y="253.95" textLength="78" lengthAdjust="spacingAndGlyphs">success of our clients.</text>
<text x="779.8" y="279.20" textLength="178" lengthAdjust="spacingAndGlyphs">Our company is a resident of the High Technologies</text>
<text x="779.8" y="287.07" textLength="176" lengthAdjust="spacingAndGlyphs">Park, as well as the Kyrgyz Association of Software</text>
<text x="779.8" y="294.94" textLength="84" lengthAdjust="spacingAndGlyphs">and Service Developers.</text>
<text x="779.8" y="321.20" textLength="174" lengthAdjust="spacingAndGlyphs">Also has partnerships with European software de-</text>
<text x="779.8" y="329.07" textLength="171.5" lengthAdjust="spacingAndGlyphs">velopment companies such as: InesSoft, Commu-</text>
<text x="779.8" y="336.94" textLength="43.5" lengthAdjust="spacingAndGlyphs">nication Lab</text>
</g>
<g id="partners">
<path d="M827.9 436.8 H786.1 V473 H791" stroke="#20c0c4" stroke-width="1.9" fill="none"/>
<g fill="#2b2a8c" font-weight="bold" font-size="7.3" stroke="#2b2a8c" stroke-width=".35">
<text x="792.7" y="447.5" textLength="19.5" lengthAdjust="spacingAndGlyphs">HIGH</text>
<text x="792.7" y="456.6" textLength="63.5" lengthAdjust="spacingAndGlyphs">TECHNOLOGY</text>
<text x="792.7" y="465.8" textLength="25.5" lengthAdjust="spacingAndGlyphs">PARK</text>
</g>
<text x="792.7" y="474" font-size="4.9" fill="#3d86a8" textLength="64" lengthAdjust="spacingAndGlyphs">of the Kyrgyz Republic</text>
<path d="M888.5 438.2H934.2" stroke="#8e3aa6" stroke-width="1.7" stroke-linecap="round"/>
<path d="M881.5 443.5H942.1" stroke="#e3207c" stroke-width="1.7" stroke-linecap="round"/>
<path d="M893.8 448.7H928" stroke="#8e3aa6" stroke-width="1.7" stroke-linecap="round"/>
<path d="M873.6 455.2H899" stroke="#e3207c" stroke-width="1.7" stroke-linecap="round"/><path d="M899 455.2H915.7" stroke="#e3207c" stroke-width="1.7" stroke-linecap="round"/>
<path d="M884.1 460.2H906" stroke="#8e3aa6" stroke-width="1.7" stroke-linecap="round"/>
<text x="900" y="472.5" font-size="9.2" font-weight="bold" fill="#333" textLength="41.5" lengthAdjust="spacing">KSSDA</text>
<text x="786" y="502.3" font-size="11.6" font-weight="bold" fill="#1a1a1a" textLength="105" lengthAdjust="spacingAndGlyphs">Communication</text>
<text x="891.6" y="502.3" font-size="11.6" fill="#b9b9b9" textLength="22.5" lengthAdjust="spacingAndGlyphs">Lab</text>
<text x="786.4" y="513.4" font-size="4.6" fill="#cdb97c" textLength="126" lengthAdjust="spacing">INSTITUT FÜR VERSTÄNDLICHKEIT</text>
<path d="M921 513.6 V500.4 A13.6 11.4 0 1 1 934.6 513.6 Z" fill="#c9a54e"/>
<ellipse cx="935.2" cy="501.4" rx="10.2" ry="9.2" fill="#ffffff"/>
<path d="M941.8 506.6 V500.8 A6.6 5.6 0 1 0 935.2 506.6 Z" fill="none" stroke="#1b1b1b" stroke-width="2.1"/>
<circle cx="936" cy="501" r="1.1" fill="#c9a54e"/>
<path d="M853.5 531.4 C846 536 847 548 858 551 C864 552.6 870 550.4 872.8 546.6" stroke="#f0a262" stroke-width="1.5" fill="none" stroke-linecap="round"/>
<path d="M860 537.3 C862 531.6 872 528.6 878.6 533.6 C884.6 538.2 884 546 878.7 550.2" stroke="#5b7cc9" stroke-width="1.5" fill="none" stroke-linecap="round"/>
<text x="827.7" y="565.6" font-size="12.4" font-style="italic" font-weight="bold" fill="#2f6db5" textLength="81.5" lengthAdjust="spacingAndGlyphs">InesSoft</text>
</g>
<defs><filter id="fBlur" x="-20%" y="-20%" width="140%" height="140%"><feGaussianBlur stdDeviation="9"/></filter><filter id="fBlur3" x="-30%" y="-30%" width="160%" height="160%"><feGaussianBlur stdDeviation="2.6"/></filter><filter id="fBlur2" x="-30%" y="-30%" width="160%" height="160%"><feGaussianBlur stdDeviation="4"/></filter>
<linearGradient id="gBowl" x1="0" y1="0" x2="1" y2="1"><stop offset="0" stop-color="#4e9a3a"/><stop offset=".5" stop-color="#d9432f"/><stop offset="1" stop-color="#6fb24a"/></linearGradient>
</defs>
<g clip-path="url(#cpPage)">
<path d="M468 442 L556 364 L782 478 L742 582 L560 566 Z" fill="#f3f3f3" filter="url(#fBlur)"/>
<ellipse cx="605.4" cy="496.5" rx="79" ry="70.5" fill="#f47b5a"/>
<clipPath id="cpEl"><ellipse cx="605.4" cy="496.5" rx="79" ry="70.5"/></clipPath>
<g clip-path="url(#cpEl)"><path d="M530 455 L578 530 L640 518 L642 546 L574 556 L556 540 L516 478 Z" fill="#5a2a1c" opacity=".6" filter="url(#fBlur3)"/></g>
<path d="M486.9 414.1 Q479.0 402.5 492.4 398.4 L555.5 379.0 Q567.0 375.5 574.6 384.8 L671.8 503.9 Q680.0 514.0 667.5 517.5 L591.4 538.5 Q575.0 543.0 565.4 529.0 Z" fill="#25262b"/>
<clipPath id="cpS"><path d="M486.9 414.1 Q479.0 402.5 492.4 398.4 L555.5 379.0 Q567.0 375.5 574.6 384.8 L671.8 503.9 Q680.0 514.0 667.5 517.5 L591.4 538.5 Q575.0 543.0 565.4 529.0 Z"/></clipPath>
<g clip-path="url(#cpS)"><path d="M560 528 L700 490 L700 530 L570 560 Z" fill="#3f434c"/><path d="M572 536.5 L690 505" stroke="#5d626d" stroke-width="1.4"/></g>
<path d="M491.2 411.7 Q484.4 401.9 495.9 398.3 L557.6 379.4 Q567.1 376.5 573.5 384.2 L666.2 498.0 Q673.2 506.6 662.6 509.5 L588.9 529.9 Q575.4 533.7 567.5 522.2 Z" fill="#08090b"/>
<clipPath id="cpW"><path d="M494.0 412.6 Q487.7 403.6 498.3 400.3 L558.9 381.8 Q567.5 379.1 573.2 386.1 L663.7 497.5 Q670.0 505.2 660.4 507.9 L587.8 528.1 Q576.3 531.3 569.4 521.4 Z"/></clipPath>
<path d="M494.0 412.6 Q487.7 403.6 498.3 400.3 L558.9 381.8 Q567.5 379.1 573.2 386.1 L663.7 497.5 Q670.0 505.2 660.4 507.9 L587.8 528.1 Q576.3 531.3 569.4 521.4 Z" fill="#f9f9f9"/>
<g clip-path="url(#cpW)">
<g transform="matrix(0.8800 -0.2650 0.5000 0.7125 479 402)">
<path d="M28 -2 L76 -2 L76 3.5 Q76 9.5 69 9.5 L36 9.5 Q29 9.5 28.5 3.5 Z" fill="#0b0c0f"/>
<g fill="#1a1a1a" font-weight="bold">
<text x="17" y="30" font-size="8" textLength="33" lengthAdjust="spacingAndGlyphs">Delicious</text>
<text x="16.5" y="39.6" font-size="8" textLength="44" lengthAdjust="spacingAndGlyphs">food for you</text>
</g>
<path d="M18.5 13 h4.6 M18.5 15.2 h3" stroke="#777" stroke-width=".9"/>
<circle cx="89" cy="14.5" r="2" fill="none" stroke="#bbb" stroke-width=".8"/>
<rect x="22" y="47" width="62" height="11" rx="5.5" fill="#f1f1f1"/>
<circle cx="29" cy="52.2" r="2" fill="none" stroke="#666" stroke-width=".9"/><path d="M30.4 53.8l1.6 1.6" stroke="#666" stroke-width=".9"/>
<text x="36" y="54.2" font-size="4" fill="#aaa">Search</text>
<g font-size="3.8" font-weight="bold"><text x="29" y="75" fill="#f0622e">Foods</text><text x="50" y="73.6" fill="#b8b8b8">Drinks</text><text x="70.5" y="73.6" fill="#b8b8b8">Snacks</text><text x="91" y="73.6" fill="#b8b8b8">Sauce</text></g>
<rect x="27" y="77.4" width="15" height="1.1" fill="#f0622e"/>
<text x="82" y="87.4" font-size="3.6" font-weight="bold" fill="#f0622e">see more</text>
<rect x="20" y="99" width="50" height="63" rx="8" fill="#ffffff" stroke="#ebebeb" stroke-width=".8"/>
<rect x="22" y="94" width="46" height="36" rx="8" fill="#3f4342"/>
<ellipse cx="45" cy="112" rx="20" ry="15" fill="#2b2e2d"/><ellipse cx="45" cy="111.4" rx="18" ry="13.4" fill="#4c9a3a"/>
<circle cx="34" cy="109" r="5" fill="#e8c22c"/><circle cx="43" cy="104.6" r="4.6" fill="#d43a2e"/><circle cx="50" cy="107" r="4" fill="#c92f2a"/><circle cx="56" cy="112" r="5" fill="#e38a3a"/><circle cx="38" cy="117" r="4.6" fill="#b2347a"/><circle cx="48" cy="118" r="5" fill="#8fc640"/><circle cx="45" cy="111" r="3" fill="#e9dcbc"/>
<g font-size="4.4" font-weight="bold" fill="#1a1a1a" text-anchor="middle"><text x="46" y="140.6">Veggie</text><text x="46" y="146.4">tomato mix</text><text x="44.4" y="154.6" fill="#f0622e" font-size="3.8">N1,900</text></g>
<rect x="76" y="97" width="50" height="63" rx="8" fill="#ffffff" stroke="#ebebeb" stroke-width=".8"/>
<rect x="74" y="90" width="46" height="36" rx="8" fill="#3f4342"/>
<ellipse cx="96" cy="108" rx="19" ry="14.6" fill="#2b2e2d"/><ellipse cx="96" cy="107.4" rx="17" ry="13" fill="#4c9a3a"/>
<circle cx="84" cy="104" r="5" fill="#e8c22c"/><circle cx="92" cy="101" r="4.4" fill="#d43a2e"/><circle cx="89" cy="113" r="5" fill="#c23a86"/><circle cx="97" cy="112" r="4.6" fill="#8fc640"/>
<path d="M21 175 l3.7 -3.3 l3.7 3.3 v3.4 h-7.4 Z" fill="#f0622e"/>
<circle cx="47" cy="175" r="1.8" fill="none" stroke="#cdcdcd" stroke-width=".8"/><circle cx="68" cy="175" r="1.8" fill="none" stroke="#cdcdcd" stroke-width=".8"/><circle cx="88" cy="175" r="1.8" fill="none" stroke="#cdcdcd" stroke-width=".8"/>
</g></g>
<path d="M639.5 405.4 Q640.8 393.5 652.3 396.9 L719.0 416.6 Q730.5 420.0 730.0 432.0 L724.5 570.0 Q724.0 583.0 711.2 580.5 L635.6 566.0 Q622.8 563.5 624.2 550.6 Z" fill="#000" opacity=".06" filter="url(#fBlur2)"/>
<path d="M642.1 403.9 Q643.3 392.0 654.8 395.4 L721.2 414.8 Q732.7 418.2 732.2 430.2 L726.5 569.5 Q726.0 581.5 714.2 579.2 L638.6 564.5 Q625.8 562.0 627.1 549.1 Z" fill="#3a3d44"/>
<path d="M646.2 404.5 Q647.3 393.5 657.8 396.6 L721.8 415.3 Q732.3 418.4 731.9 429.4 L726.2 567.2 Q725.7 578.2 714.9 576.0 L641.4 561.6 Q630.6 559.5 631.7 548.5 Z" fill="#08090c"/>
<path d="M649.6 407.6 Q650.6 397.6 660.2 400.4 L720.1 417.8 Q729.7 420.6 729.3 430.6 L723.5 564.3 Q723.1 574.3 713.3 572.4 L644.8 558.8 Q635.0 556.9 636.0 546.9 Z" fill="#0d1738"/>
<path d="M669.9 401.9 L711.1 413.9 L708.1 419.1 L672.1 408.7 Z" fill="#08090c" stroke="#08090c" stroke-width="2.5" stroke-linejoin="round"/>
<g transform="translate(684 478) rotate(6) scale(.86)">
<path d="M-11 9 L2.2 -12.5 L4.6 -11 L-7.6 9 Z" fill="#ffffff"/>
<path d="M3.5 -9.5 L12 9 L7.6 9 L4.6 2.2 L-3.2 2.2 L-1.2 -1.2 L3.2 -1.2 L1.6 -5.4 Z" fill="#f0643a"/>
<text x="0" y="24.2" font-size="3.9" font-weight="bold" fill="#e8e8e8" text-anchor="middle" textLength="50" lengthAdjust="spacing">DIGITAL STUDIO</text>
</g>
</g>
</g>
</svg>
<svg id="ch" width="1024" height="641" viewBox="0 0 1024 641">
<g id="hruler">
<rect x="200" y="91.5" width="824" height="12.5" fill="#212121"/>
<rect x="200" y="103.1" width="824" height="1" fill="#6a6a6a"/>
<path d="M224.08 102V103.6 M234.50 100.2V103.6 M244.91 102V103.6 M255.33 93V103.6 M265.75 102V103.6 M276.17 100.2V103.6 M286.58 102V103.6 M297.00 93V103.6 M307.42 102V103.6 M317.83 100.2V103.6 M328.25 102V103.6 M338.67 93V103.6 M349.09 102V103.6 M359.50 100.2V103.6 M369.92 102V103.6 M380.34 93V103.6 M390.76 102V103.6 M401.18 100.2V103.6 M411.59 102V103.6 M422.01 93V103.6 M432.43 102V103.6 M442.85 100.2V103.6 M453.26 102V103.6 M463.68 93V103.6 M474.10 102V103.6 M484.51 100.2V103.6 M494.93 102V103.6 M505.35 93V103.6 M515.77 102V103.6 M526.18 100.2V103.6 M536.60 102V103.6 M547.02 93V103.6 M557.44 102V103.6 M567.86 100.2V103.6 M578.27 102V103.6 M588.69 93V103.6 M599.11 102V103.6 M609.53 100.2V103.6 M619.94 102V103.6 M630.36 93V103.6 M640.78 102V103.6 M651.19 100.2V103.6 M661.61 102V103.6 M672.03 93V103.6 M682.45 102V103.6 M692.87 100.2V103.6 M703.28 102V103.6 M713.70 93V103.6 M724.12 102V103.6 M734.54 100.2V103.6 M744.95 102V103.6 M755.37 93V103.6 M765.79 102V103.6 M776.21 100.2V103.6 M786.62 102V103.6 M797.04 93V103.6 M807.46 102V103.6 M817.88 100.2V103.6 M828.29 102V103.6 M838.71 93V103.6 M849.13 102V103.6 M859.55 100.2V103.6 M869.96 102V103.6 M880.38 93V103.6 M890.80 102V103.6 M901.22 100.2V103.6 M911.63 102V103.6 M922.05 93V103.6 M932.47 102V103.6 M942.88 100.2V103.6 M953.30 102V103.6 M963.72 93V103.6 M974.14 102V103.6 M984.56 100.2V103.6 M994.97 102V103.6 M1005.39 93V103.6 M1015.81 102V103.6" stroke="#9c9c9c" stroke-width="0.8" fill="none"/>
<g fill="#ececec" font-weight="bold" font-size="7.6">
<text x="214.96" y="100.1" textLength="15.1" lengthAdjust="spacingAndGlyphs">400</text>
<text x="256.63" y="100.1" textLength="15.1" lengthAdjust="spacingAndGlyphs">200</text>
<text x="298.30" y="100.1" textLength="5.0" lengthAdjust="spacingAndGlyphs">0</text>
<text x="339.97" y="100.1" textLength="15.1" lengthAdjust="spacingAndGlyphs">200</text>
<text x="381.64" y="100.1" textLength="15.1" lengthAdjust="spacingAndGlyphs">400</text>
<text x="423.31" y="100.1" textLength="15.1" lengthAdjust="spacingAndGlyphs">600</text>
<text x="464.98" y="100.1" textLength="15.1" lengthAdjust="spacingAndGlyphs">800</text>
<text x="506.65" y="100.1" textLength="20.2" lengthAdjust="spacingAndGlyphs">1000</text>
<text x="548.32" y="100.1" textLength="20.2" lengthAdjust="spacingAndGlyphs">1200</text>
<text x="589.99" y="100.1" textLength="20.2" lengthAdjust="spacingAndGlyphs">1400</text>
<text x="631.66" y="100.1" textLength="20.2" lengthAdjust="spacingAndGlyphs">1600</text>
<text x="673.33" y="100.1" textLength="20.2" lengthAdjust="spacingAndGlyphs">1800</text>
<text x="715.00" y="100.1" textLength="20.2" lengthAdjust="spacingAndGlyphs">2000</text>
<text x="756.67" y="100.1" textLength="20.2" lengthAdjust="spacingAndGlyphs">2200</text>
<text x="798.34" y="100.1" textLength="20.2" lengthAdjust="spacingAndGlyphs">2400</text>
<text x="840.01" y="100.1" textLength="20.2" lengthAdjust="spacingAndGlyphs">2600</text>
<text x="881.68" y="100.1" textLength="20.2" lengthAdjust="spacingAndGlyphs">2800</text>
<text x="923.35" y="100.1" textLength="20.2" lengthAdjust="spacingAndGlyphs">3000</text>
<text x="965.02" y="100.1" textLength="20.2" lengthAdjust="spacingAndGlyphs">3200</text>
<text x="1006.69" y="100.1" textLength="20.2" lengthAdjust="spacingAndGlyphs">3400</text>
</g></g>
<path d="M201.5 97.6H213.5 M207.6 92.5V102.8" stroke="#5a5a5a" stroke-width=".8" stroke-dasharray="1 1" fill="none"/>
<g id="vruler">
<rect x="200" y="103.6" width="15" height="15.4" fill="#383838"/>
<rect x="200" y="119" width="14.6" height="491.5" fill="#212121"/>
<rect x="214.2" y="91" width="0.9" height="536" fill="#5a5a5a"/>
<rect x="200" y="118.6" width="15" height="0.8" fill="#6a6a6a"/>
<path d="M212.8 122.95H214.5 M202.5 132.10H214.5 M212.8 141.25H214.5 M211 150.39H214.5 M212.8 159.53H214.5 M202.5 168.68H214.5 M212.8 177.82H214.5 M211 186.97H214.5 M212.8 196.11H214.5 M202.5 205.26H214.5 M212.8 214.40H214.5 M211 223.55H214.5 M212.8 232.69H214.5 M202.5 241.84H214.5 M212.8 250.98H214.5 M211 260.13H214.5 M212.8 269.27H214.5 M202.5 278.42H214.5 M212.8 287.56H214.5 M211 296.71H214.5 M212.8 305.85H214.5 M202.5 315.00H214.5 M212.8 324.14H214.5 M211 333.29H214.5 M212.8 342.43H214.5 M202.5 351.58H214.5 M212.8 360.72H214.5 M211 369.87H214.5 M212.8 379.01H214.5 M202.5 388.16H214.5 M212.8 397.30H214.5 M211 406.45H214.5 M212.8 415.59H214.5 M202.5 424.74H214.5 M212.8 433.88H214.5 M211 443.03H214.5 M212.8 452.17H214.5 M202.5 461.32H214.5 M212.8 470.46H214.5 M211 479.61H214.5 M212.8 488.75H214.5 M202.5 497.90H214.5 M212.8 507.04H214.5 M211 516.19H214.5 M212.8 525.33H214.5 M202.5 534.48H214.5 M212.8 543.62H214.5 M211 552.77H214.5 M212.8 561.91H214.5 M202.5 571.06H214.5 M212.8 580.20H214.5 M211 589.35H214.5 M212.8 598.49H214.5 M202.5 607.64H214.5" stroke="#9c9c9c" stroke-width="0.8" fill="none"/>
<g fill="#ececec" font-weight="bold" font-size="7.4" text-anchor="middle">
<text x="206" y="140.30" textLength="5.4" lengthAdjust="spacingAndGlyphs">0</text>
<text x="206" y="176.88" textLength="5.4" lengthAdjust="spacingAndGlyphs">2</text>
<text x="206" y="183.48" textLength="5.4" lengthAdjust="spacingAndGlyphs">0</text>
<text x="206" y="190.08" textLength="5.4" lengthAdjust="spacingAndGlyphs">0</text>
<text x="206" y="213.46" textLength="5.4" lengthAdjust="spacingAndGlyphs">4</text>
<text x="206" y="220.06" textLength="5.4" lengthAdjust="spacingAndGlyphs">0</text>
<text x="206" y="226.66" textLength="5.4" lengthAdjust="spacingAndGlyphs">0</text>
<text x="206" y="250.04" textLength="5.4" lengthAdjust="spacingAndGlyphs">6</text>
<text x="206" y="256.64" textLength="5.4" lengthAdjust="spacingAndGlyphs">0</text>
<text x="206" y="263.24" textLength="5.4" lengthAdjust="spacingAndGlyphs">0</text>
<text x="206" y="286.62" textLength="5.4" lengthAdjust="spacingAndGlyphs">8</text>
<text x="206" y="293.22" textLength="5.4" lengthAdjust="spacingAndGlyphs">0</text>
<text x="206" y="299.82" textLength="5.4" lengthAdjust="spacingAndGlyphs">0</text>
<text x="206" y="323.20" textLength="5.4" lengthAdjust="spacingAndGlyphs">1</text>
<text x="206" y="329.80" textLength="5.4" lengthAdjust="spacingAndGlyphs">0</text>
<text x="206" y="336.40" textLength="5.4" lengthAdjust="spacingAndGlyphs">0</text>
<text x="206" y="343.00" textLength="5.4" lengthAdjust="spacingAndGlyphs">0</text>
<text x="206" y="359.78" textLength="5.4" lengthAdjust="spacingAndGlyphs">1</text>
<text x="206" y="366.38" textLength="5.4" lengthAdjust="spacingAndGlyphs">2</text>
<text x="206" y="372.98" textLength="5.4" lengthAdjust="spacingAndGlyphs">0</text>
<text x="206" y="379.58" textLength="5.4" lengthAdjust="spacingAndGlyphs">0</text>
<text x="206" y="396.36" textLength="5.4" lengthAdjust="spacingAndGlyphs">1</text>
<text x="206" y="402.96" textLength="5.4" lengthAdjust="spacingAndGlyphs">4</text>
<text x="206" y="409.56" textLength="5.4" lengthAdjust="spacingAndGlyphs">0</text>
<text x="206" y="416.16" textLength="5.4" lengthAdjust="spacingAndGlyphs">0</text>
<text x="206" y="432.94" textLength="5.4" lengthAdjust="spacingAndGlyphs">1</text>
<text x="206" y="439.54" textLength="5.4" lengthAdjust="spacingAndGlyphs">6</text>
<text x="206" y="446.14" textLength="5.4" lengthAdjust="spacingAndGlyphs">0</text>
<text x="206" y="452.74" textLength="5.4" lengthAdjust="spacingAndGlyphs">0</text>
<text x="206" y="469.52" textLength="5.4" lengthAdjust="spacingAndGlyphs">1</text>
<text x="206" y="476.12" textLength="5.4" lengthAdjust="spacingAndGlyphs">8</text>
<text x="206" y="482.72" textLength="5.4" lengthAdjust="spacingAndGlyphs">0</text>
<text x="206" y="489.32" textLength="5.4" lengthAdjust="spacingAndGlyphs">0</text>
<text x="206" y="506.10" textLength="5.4" lengthAdjust="spacingAndGlyphs">2</text>
<text x="206" y="512.70" textLength="5.4" lengthAdjust="spacingAndGlyphs">0</text>
<text x="206" y="519.30" textLength="5.4" lengthAdjust="spacingAndGlyphs">0</text>
<text x="206" y="525.90" textLength="5.4" lengthAdjust="spacingAndGlyphs">0</text>
<text x="206" y="542.68" textLength="5.4" lengthAdjust="spacingAndGlyphs">2</text>
<text x="206" y="549.28" textLength="5.4" lengthAdjust="spacingAndGlyphs">2</text>
<text x="206" y="555.88" textLength="5.4" lengthAdjust="spacingAndGlyphs">0</text>
<text x="206" y="562.48" textLength="5.4" lengthAdjust="spacingAndGlyphs">0</text>
<text x="206" y="579.26" textLength="5.4" lengthAdjust="spacingAndGlyphs">2</text>
<text x="206" y="585.86" textLength="5.4" lengthAdjust="spacingAndGlyphs">4</text>
<text x="206" y="592.46" textLength="5.4" lengthAdjust="spacingAndGlyphs">0</text>
<text x="206" y="599.06" textLength="5.4" lengthAdjust="spacingAndGlyphs">0</text>
</g></g>
<rect x="200" y="610.5" width="14.2" height="31" fill="#3a3a3a"/><rect x="200" y="610" width="824" height="0.9" fill="#4e4e4e"/><rect x="215" y="118.6" width="809" height="0.8" fill="#494949"/>
<g id="icons" fill="none" stroke-linecap="butt">
<path d="M63.6 13.6 L71 7.2 L78.4 13.6 L76.6 13.6 L76.6 19.6 L72.8 19.6 L72.8 15.2 L69.2 15.2 L69.2 19.6 L65.4 19.6 L65.4 13.6 Z" fill="#c9c9c9"/>
<circle cx="1021.5" cy="11.5" r="3.6" stroke="#9a9a9a" stroke-width="1.3"/>
<rect x="2.4" y="40" width="1.4" height="16.5" fill="#262626"/>
<path d="M24.7 42.4H40.3V55.6H24.7Z M24.7 49H40.3 M32.5 42.4V55.6" stroke="#a8a8a8" stroke-width=".8"/>
<rect x="22.0" y="39.699999999999996" width="5.4" height="5.4" fill="#f2f2f2"/>
<rect x="30.1" y="40.0" width="4.8" height="4.8" fill="#2a2a2a" stroke="#bdbdbd" stroke-width=".9"/>
<rect x="37.9" y="40.0" width="4.8" height="4.8" fill="#2a2a2a" stroke="#bdbdbd" stroke-width=".9"/>
<rect x="22.3" y="46.6" width="4.8" height="4.8" fill="#2a2a2a" stroke="#bdbdbd" stroke-width=".9"/>
<rect x="30.1" y="46.6" width="4.8" height="4.8" fill="#2a2a2a" stroke="#bdbdbd" stroke-width=".9"/>
<rect x="37.9" y="46.6" width="4.8" height="4.8" fill="#2a2a2a" stroke="#bdbdbd" stroke-width=".9"/>
<rect x="22.3" y="53.2" width="4.8" height="4.8" fill="#2a2a2a" stroke="#bdbdbd" stroke-width=".9"/>
<rect x="30.1" y="53.2" width="4.8" height="4.8" fill="#2a2a2a" stroke="#bdbdbd" stroke-width=".9"/>
<rect x="37.9" y="53.2" width="4.8" height="4.8" fill="#2a2a2a" stroke="#bdbdbd" stroke-width=".9"/>
<g stroke="#cfcfcf" stroke-width="1.2"><rect x="241.2" y="41.6" width="4.4" height="6" rx="2.2" transform="rotate(-20 243.4 44.6)"/><rect x="243.2" y="46.6" width="4.4" height="6" rx="2.2" transform="rotate(-20 245.4 49.6)"/><path d="M239.4 42.2 L249.6 52.6"/></g>
<g stroke="#cfcfcf" stroke-width="1"><rect x="265" y="34.2" width="11.6" height="10.2"/><path d="M267 39.3H273.6" stroke-width="1.6"/><circle cx="273.6" cy="39.3" r="1.5" fill="#cfcfcf" stroke="none"/><path d="M267 36.6V42"/>
<rect x="265" y="53" width="11.6" height="10.6"/><path d="M270.8 55V60.4" stroke-width="1.6"/><circle cx="270.8" cy="60.6" r="1.5" fill="#cfcfcf" stroke="none"/><path d="M268 55H273.6"/></g>
<rect x="359" y="41" width="16.6" height="15" fill="#1b1b1b"/>
<g stroke="#e4e4e4" stroke-width="1.1"><rect x="365.4" y="43.6" width="3.8" height="5" rx="1.9"/><rect x="365.4" y="48.6" width="3.8" height="5" rx="1.9"/></g>
<path d="M384.6 43 L394.4 43 L391.4 36.4 Z" stroke="#cfcfcf" stroke-width="1.2" stroke-linejoin="round"/><path d="M388.4 43 A3.2 3.2 0 0 0 387 40.2" stroke="#cfcfcf" stroke-width=".9"/>
<path d="M384.4 62 L387.8 55.8 L395 55.8 L391.6 62 Z" fill="#cfcfcf"/>
<g stroke="#646464" stroke-width="2"><path d="M494.2 35.6 A5 5 0 1 0 495.4 41.6"/><path d="M509.4 35.6 A5 5 0 1 1 508.2 41.6"/></g>
<path d="M492.2 32.4 L497.8 33.8 L494 38.4 Z M511.4 32.4 L505.8 33.8 L509.6 38.4 Z" fill="#646464"/>
<path d="M483.6 54 L488.2 58 L483.6 62 Z M497.2 54 L492.6 58 L497.2 62 Z" fill="#646464"/><path d="M490.4 53V63" stroke="#646464" stroke-width=".8"/>
<path d="M508.6 52.8 L517.4 52.8 L513 57 Z M508.6 64.6 L517.4 64.6 L513 60.4 Z" fill="#646464"/><path d="M508 58.7H518" stroke="#646464" stroke-width=".8"/>
<g stroke="#646464" stroke-width=".9"><path d="M530.4 42.6V39.6H533.4 M547.6 39.6H550.6V42.6 M550.6 55.4V58.4H547.6 M533.4 58.4H530.4V55.4"/></g>
<text x="540.4" y="54.6" text-anchor="middle" font-size="17" fill="#929292" style="font-family:'Liberation Serif','DejaVu Serif',serif">P</text>
<rect x="566.4" y="41.7" width="3" height="3" fill="#8c8c8c"/><rect x="569.5" y="41.7" width="3" height="3" fill="#8c8c8c"/><rect x="572.6" y="41.7" width="3" height="3" fill="#8c8c8c"/><path d="M568 41.7V39.9H574V41.7 M571 39.9V38.5" stroke="#8c8c8c" stroke-width=".8"/>
<path d="M571 33 L573.6 36 L568.4 36 Z" fill="#8c8c8c"/><rect x="569.6" y="36" width="2.8" height="2.4" fill="#8c8c8c"/>
<rect x="592.4" y="41.2" width="3" height="3" fill="#8c8c8c"/><rect x="595.5" y="41.2" width="3" height="3" fill="#8c8c8c"/><rect x="598.6" y="41.2" width="3" height="3" fill="#8c8c8c"/><path d="M594 41.2V39.4H600V41.2 M597 39.4V38" stroke="#8c8c8c" stroke-width=".8"/>
<path d="M584.8 40.4 L588.6 37.2 L588.6 43.6 Z" fill="#c4c4c4"/><path d="M588 40.4H592" stroke="#c4c4c4" stroke-width="1.4"/>
<rect x="566.4" y="58.2" width="3" height="3" fill="#8c8c8c"/><rect x="569.5" y="58.2" width="3" height="3" fill="#8c8c8c"/><rect x="572.6" y="58.2" width="3" height="3" fill="#8c8c8c"/><path d="M568 58.2V56.4H574V58.2 M571 56.4V55" stroke="#8c8c8c" stroke-width=".8"/>
<path d="M571 66.4 L573.6 63.4 L568.4 63.4 Z" fill="#8c8c8c"/><path d="M571 52 L573.6 55 L568.4 55 Z" fill="#8c8c8c"/>
<rect x="586.0" y="60.7" width="3" height="3" fill="#8c8c8c"/><rect x="589.1" y="60.7" width="3" height="3" fill="#8c8c8c"/><rect x="592.2" y="60.7" width="3" height="3" fill="#8c8c8c"/><path d="M587.6 60.7V58.9H593.6V60.7 M590.6 58.9V57.5" stroke="#8c8c8c" stroke-width=".8"/>
<path d="M602.4 60 L598.6 56.8 L598.6 63.2 Z" fill="#c4c4c4"/><path d="M595 60H599.2" stroke="#c4c4c4" stroke-width="1.4"/>
<rect x="614" y="32.4" width="16" height="14" fill="#ffffff"/><path d="M614.4 46 L629.6 32.8" stroke="#f02020" stroke-width="1.5"/>
<rect x="614" y="51" width="16" height="14.4" fill="#000000"/><rect x="618.2" y="54.8" width="7.6" height="6.8" fill="#4a4a4a"/>
<rect x="634.5" y="32.9" width="12" height="13" fill="#2b2b2b" stroke="#474747" stroke-width="1"/><path d="M639.2 36.6 L642.0 39.4 L639.2 42.199999999999996" stroke="#cfcfcf" stroke-width="1.2"/>
<rect x="634.5" y="51.5" width="12" height="13.4" fill="#2b2b2b" stroke="#474747" stroke-width="1"/><path d="M639.2 55.400000000000006 L642.0 58.2 L639.2 61.0" stroke="#cfcfcf" stroke-width="1.2"/>
<rect x="658.1" y="32.9" width="12.4" height="12.6" fill="#2b2b2b" stroke="#474747" stroke-width="1"/><path d="M661.7 37.4 L664.3000000000001 34.8 L666.9000000000001 37.4 M661.7 40.99999999999999 L664.3000000000001 43.599999999999994 L666.9000000000001 40.99999999999999" stroke="#cfcfcf" stroke-width="1.2"/>
<rect x="671" y="32.9" width="42.6" height="12.6" fill="#2b2b2b" stroke="#474747" stroke-width="1"/>
<rect x="714.1" y="32.9" width="13.6" height="12.6" fill="#2b2b2b" stroke="#474747" stroke-width="1"/><path d="M718.1 37.99999999999999 L720.9 40.8 L723.6999999999999 37.99999999999999" stroke="#cfcfcf" stroke-width="1.2"/>
<text x="674.6" y="42.6" font-size="9" font-weight="bold" fill="#ececec" textLength="17.5" lengthAdjust="spacingAndGlyphs">1 pt</text>
<rect x="657" y="51.2" width="56.6" height="14.2" fill="#f0f0f0"/><rect x="660.8" y="55.6" width="45" height="5.4" fill="#000"/>
<rect x="714.1" y="51.5" width="13.6" height="13.4" fill="#2b2b2b" stroke="#474747" stroke-width="1"/><path d="M718.1 57.0 L720.9 59.800000000000004 L723.6999999999999 57.0" stroke="#cfcfcf" stroke-width="1.2"/>
<rect x="742.6" y="34.4" width="9" height="8.6" stroke="#cfcfcf" stroke-width="1.2" stroke-dasharray="2.2 1"/><path d="M752.4 44.4H754.4" stroke="#cfcfcf" stroke-width="1"/>
<rect x="767.6" y="34.4" width="9.2" height="8" stroke="#cfcfcf" stroke-width="1.1"/><path d="M767 44.2H777.6" stroke="#8a8a8a" stroke-width="1.6"/>
<text x="791.6" y="43" font-size="10" font-style="italic" font-weight="bold" fill="#cfcfcf">fx.</text>
<rect x="740.4" y="53.8" width="9.6" height="9.6" fill="#5a5a5a" stroke="#bdbdbd" stroke-width=".9"/><path d="M740.4 53.8h3.2v3.2h-3.2z M746.8 53.8h3.2v3.2h-3.2z M743.6 57h3.2v3.2h-3.2z M740.4 60.2h3.2v3.2h-3.2z M746.8 60.2h3.2v3.2h-3.2z" fill="#a4a4a4"/>
<rect x="756.4" y="51.5" width="43" height="13.6" fill="#2b2b2b" stroke="#474747" stroke-width="1"/>
<text x="760" y="61.8" font-size="9" font-weight="bold" fill="#ececec" textLength="20.5" lengthAdjust="spacingAndGlyphs">100%</text>
<rect x="799.9" y="51.5" width="12.6" height="13.4" fill="#2b2b2b" stroke="#474747" stroke-width="1"/><path d="M804.9 55.400000000000006 L807.6999999999999 58.2 L804.9 61.0" stroke="#cfcfcf" stroke-width="1.2"/>
<rect x="825" y="31.8" width="15.6" height="13" fill="#1c1c1c"/>
<path d="M827 34.4H838.6 M827 36.8H838.6 M827 39.2H838.6 M827 41.6H838.6" stroke="#e6e6e6" stroke-width="1.1"/><rect x="830.6" y="33.4" width="4.6" height="2" fill="#e6e6e6"/>
<path d="M849.6 33.6H853 M849.6 36H853 M849.6 38.4H853 M849.6 40.8H853 M849.6 43.2H853 M857.6 33.6H861 M857.6 36H861 M857.6 38.4H861 M857.6 40.8H861 M857.6 43.2H861" stroke="#cfcfcf" stroke-width="1"/><rect x="853.6" y="33" width="3.6" height="10.6" stroke="#cfcfcf" stroke-width=".9"/>
<path d="M826.6 54.4H832 M826.6 57H830 M826.6 59.6H830 M826.6 62.2H832 M826.6 64.4H838" stroke="#9a9a9a" stroke-width="1"/><circle cx="833.8" cy="59.6" r="3.4" fill="#bdbdbd"/><circle cx="837.8" cy="54.4" r="2.7" fill="#2d8cf0"/>
<path d="M849.6 53.4H861 M849.6 62H861 M849.6 64.4H861" stroke="#cfcfcf" stroke-width="1"/><rect x="852.4" y="55.6" width="6" height="3.8" fill="#cfcfcf"/>
<rect x="877.6" y="35" width="8.8" height="8.8" stroke="#b08a60" stroke-width=".8" stroke-dasharray="1 1"/>
<rect x="875.9" y="33.3" width="3.4" height="3.4" rx="1" fill="#2d8cf0"/>
<rect x="884.6999999999999" y="33.3" width="3.4" height="3.4" rx="1" fill="#2d8cf0"/>
<rect x="875.9" y="42.099999999999994" width="3.4" height="3.4" rx="1" fill="#2d8cf0"/>
<rect x="884.6999999999999" y="42.099999999999994" width="3.4" height="3.4" rx="1" fill="#2d8cf0"/>
<rect x="893.5" y="32.9" width="12.4" height="12.6" fill="#2b2b2b" stroke="#474747" stroke-width="1"/><path d="M897.1 37.4 L899.7 34.8 L902.3000000000001 37.4 M897.1 40.99999999999999 L899.7 43.599999999999994 L902.3000000000001 40.99999999999999" stroke="#cfcfcf" stroke-width="1.2"/>
<rect x="906.4" y="32.9" width="57.2" height="12.6" fill="#2b2b2b" stroke="#474747" stroke-width="1"/>
<text x="911.5" y="42.6" font-size="9" font-weight="bold" fill="#ececec" textLength="22.5" lengthAdjust="spacingAndGlyphs">12 px</text>
<rect x="893.3" y="51.3" width="55.8" height="14.1" fill="#e4e4e4"/><path d="M895 53.4H941.6V65.4" stroke="#2a2a2a" stroke-width="1.3"/>
<rect x="951.1" y="51.5" width="12.2" height="13.4" fill="#2b2b2b" stroke="#474747" stroke-width="1"/><path d="M954.4000000000001 57.0 L957.2 59.800000000000004 L960.0 57.0" stroke="#cfcfcf" stroke-width="1.2"/>
<rect x="980.4" y="34.4" width="9" height="8.6" stroke="#cfcfcf" stroke-width="1.2" stroke-dasharray="2.2 1"/><path d="M990.4 44.4H992.2" stroke="#cfcfcf" stroke-width="1"/>
<rect x="1003.6" y="32.2" width="21" height="13.6" fill="#f2f2f2"/>
<text x="1007.4" y="42.4" font-size="8.6" font-weight="bold" fill="#333" >[Bas</text>
<path d="M5.2 78 L3.2 75.6 L5.2 73.2 M8.8 78 L6.8 75.6 L8.8 73.2" stroke="#5a5a5a" stroke-width="1"/>
<path d="M5.6 89.2 L7.6 86.8 L9.6 89.2 M5.6 92 L7.6 94.4 L9.6 92" stroke="#8a8a8a" stroke-width="1"/>
<path d="M186 87.6H194.4 M186 89.9H194.4 M186 92.2H194.4" stroke="#8e8e8e" stroke-width="1"/>
<rect x="148.2" y="619.4" width="8.4" height="8.4" stroke="#cfcfcf" stroke-width="1"/><path d="M152.4 621.4V625.8 M150.2 623.6H154.6" stroke="#cfcfcf" stroke-width="1"/>
<path d="M170.6 620.6H178.4 M172.8 620.4V619.2H176.2V620.4 M171.6 621.6L172.2 628H176.8L177.4 621.6 M173.6 622.6V627 M175.4 622.6V627" stroke="#5e5e5e" stroke-width="1"/>
</g>
<g id="status">
<text x="214" y="638.4" font-size="8.6" font-weight="bold" fill="#e0e0e0" textLength="14" lengthAdjust="spacingAndGlyphs">25%</text>
<path d="M249.4 633.6 L252 636.2 L254.6 633.6" stroke="#bdbdbd" stroke-width="1.2" fill="none"/>
<g fill="#7a7a7a"><path d="M271.6 635.2 L275 632.6 V637.8Z"/><rect x="269.6" y="632.6" width="1.3" height="5.2"/><path d="M284.6 635.2 L288 632.6 V637.8Z"/>
<path d="M388.4 635.2 L385 632.6 V637.8Z"/><path d="M404.4 635.2 L401 632.6 V637.8Z"/><rect x="404.8" y="632.6" width="1.3" height="5.2"/></g>
<rect x="301" y="629.6" width="59" height="11.4" fill="#262626"/><rect x="360" y="629.6" width="13" height="11.4" fill="#2b2b2b" stroke="#444" stroke-width=".8"/>
<path d="M363.6 633.8 L366.4 636.4 L369.2 633.8" stroke="#cfcfcf" stroke-width="1.2" fill="none"/>
<text x="304" y="638.4" font-size="8.6" font-weight="bold" fill="#e8e8e8">1</text>
<path d="M423.4 638 A4.6 4.6 0 1 1 431.6 638" stroke="#a8a8a8" stroke-width="2" fill="none"/><circle cx="433.6" cy="639.4" r=".8" fill="#a8a8a8"/>
<text x="448.6" y="638.4" font-size="8.4" font-weight="bold" fill="#d6d6d6" textLength="66" lengthAdjust="spacingAndGlyphs">[Basic] (working)</text>
<path d="M533.6 634 L536 636.4 L538.4 634" stroke="#9a9a9a" stroke-width="1.1" fill="none"/>
<ellipse cx="556.6" cy="635.6" rx="4.2" ry="3.9" fill="#3fc04a"/>
<text x="566.4" y="638.4" font-size="8.4" font-weight="bold" fill="#e8e8e8" textLength="37.5" lengthAdjust="spacingAndGlyphs">No errors</text>
<path d="M617.6 634 L620 636.4 L622.4 634" stroke="#9a9a9a" stroke-width="1.1" fill="none"/>
</g>
</svg>
</div></body></html>
